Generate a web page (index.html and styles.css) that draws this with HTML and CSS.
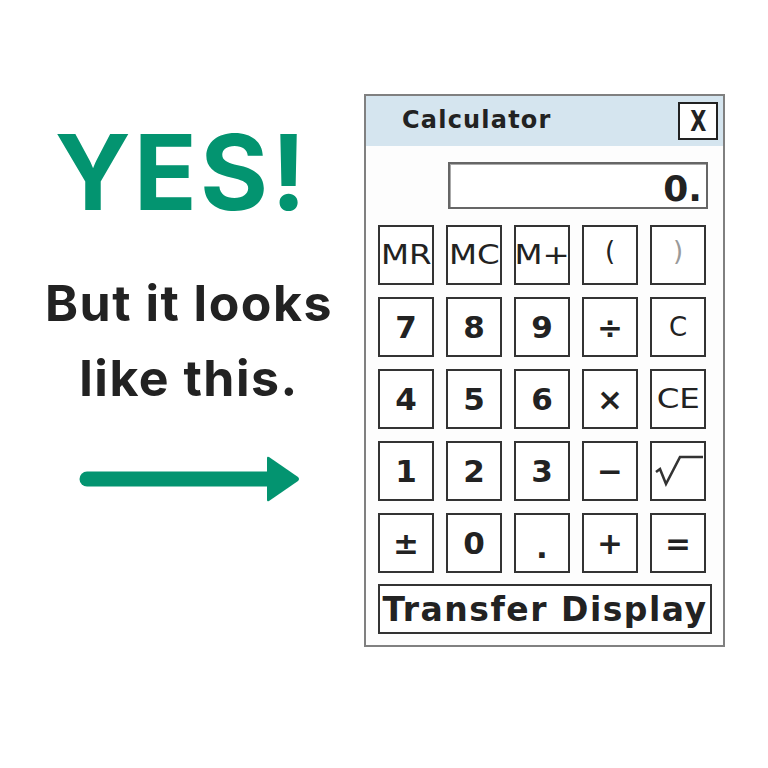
FILE: index.html
```html
<!DOCTYPE html>
<html>
<head>
<meta charset="utf-8">
<link rel="stylesheet" href="styles.css">
</head>
<body>
<div class="page">
  <div class="left">
    <div class="yes">YES!</div>
    <div class="but">But it looks<br>like this.</div>
    <svg class="arrow" width="230" height="50" viewBox="0 0 230 50">
      <line x1="8" y1="25" x2="192" y2="25" stroke="#039470" stroke-width="15" stroke-linecap="round"/>
      <path d="M188 4 Q188 2 190 3 L219 23 Q221 25 219 27 L190 47 Q188 48 188 46 Z" fill="#039470"/>
    </svg>
  </div>
  <div class="calc">
    <div class="titlebar">
      <span class="title">Calculator</span>
      <span class="close"><span class="xch">X</span></span>
    </div>
    <div class="display">0.</div>
    <div class="keys">
      <div class="key mem"><span class="wide">MR</span></div>
      <div class="key mem"><span class="wide">MC</span></div>
      <div class="key mem"><span class="wide">M+</span></div>
      <div class="key paren">(</div>
      <div class="key paren dim">)</div>
      <div class="key num">7</div>
      <div class="key num">8</div>
      <div class="key num">9</div>
      <div class="key op">÷</div>
      <div class="key mem">C</div>
      <div class="key num">4</div>
      <div class="key num">5</div>
      <div class="key num">6</div>
      <div class="key op">×</div>
      <div class="key mem"><span class="wide">CE</span></div>
      <div class="key num">1</div>
      <div class="key num">2</div>
      <div class="key num">3</div>
      <div class="key op">−</div>
      <div class="key sqrt" aria-label="√">
        <svg width="52" height="56" viewBox="0 0 52 56">
          <polyline points="4,29 8,26 14,41 28,14 51,14" fill="none" stroke="#333" stroke-width="2.6" stroke-linejoin="miter"/>
        </svg>
      </div>
      <div class="key op">±</div>
      <div class="key num">0</div>
      <div class="key op dot">.</div>
      <div class="key op">+</div>
      <div class="key op">=</div>
    </div>
    <div class="transfer"><span class="tx">Transfer Display</span></div>
  </div>
</div>
</body>
</html>
```
FILE: styles.css
```css
html, body {
  margin: 0;
  padding: 0;
  background: #ffffff;
}
.page {
  width: 768px;
  height: 768px;
  display: flex;
  flex-direction: row;
  align-items: flex-start;
}
.left {
  width: 364px;
  padding-top: 114px;
  display: flex;
  flex-direction: column;
  align-items: center;
  font-family: Inter, "Open Sans", sans-serif;
  font-weight: 700;
}
.yes {
  color: #039470;
  font-size: 104px;
  line-height: 116px;
  letter-spacing: 3px;
  margin-left: 0px;
}
.but {
  color: #222222;
  font-size: 50px;
  line-height: 75px;
  letter-spacing: 1.5px;
  text-align: center;
  margin-top: 36px;
  margin-left: 14px;
}
.arrow {
  margin-top: 38px;
  margin-left: 24px;
  display: block;
}
.calc {
  margin-top: 94px;
  width: 357px;
  height: 549px;
  border: 2px solid #808080;
  background: #fdfdfd;
  display: flex;
  flex-direction: column;
  font-family: "DejaVu Sans", Verdana, sans-serif;
  color: #222;
}
.titlebar {
  height: 50px;
  background: #d5e5ef;
  display: flex;
  align-items: center;
  justify-content: space-between;
  padding: 0 5px 0 36px;
}
.title {
  font-weight: 700;
  font-size: 24px;
  letter-spacing: 1.2px;
  margin-top: -2px;
}
.close {
  width: 36px;
  height: 34px;
  border: 2px solid #222;
  display: flex;
  align-items: center;
  justify-content: center;
  background: #fff;
}
.xch {
  display: inline-block;
  font-size: 29px;
  font-weight: 700;
  line-height: 1;
  transform: scaleX(0.72);
}
.display {
  align-self: flex-end;
  margin: 16px 15px 0 0;
  width: 252px;
  height: 43px;
  border: 2px solid #666;
  box-shadow: inset 1px 1px 0 #aaa;
  background: #fff;
  text-align: right;
  font-weight: 700;
  font-size: 36px;
  line-height: 50px;
  padding-right: 4px;
}
.keys {
  margin: 16px 0 0 12px;
  display: grid;
  grid-template-columns: repeat(5, 56px);
  grid-auto-rows: 60px;
  column-gap: 12px;
  row-gap: 12px;
}
.key {
  box-sizing: border-box;
  border: 2px solid #333;
  background: #fff;
  display: flex;
  align-items: center;
  justify-content: center;
  overflow: hidden;
}
.num {
  font-size: 31px;
  font-weight: 700;
}
.op {
  font-size: 31px;
  font-weight: 700;
}
.dot {
  padding-top: 8px;
}
.mem {
  font-size: 26px;
}
.wide {
  display: inline-block;
  transform: scaleX(1.25);
}
.paren {
  font-size: 26px;
  font-weight: 400;
  padding-bottom: 8px;
}
.dim {
  color: #9a9a9a;
}
.sqrt svg {
  display: block;
}
.transfer {
  margin: 11px 0 0 12px;
  width: 334px;
  height: 50px;
  box-sizing: border-box;
  border: 2px solid #333;
  background: #fff;
  display: flex;
  align-items: center;
  justify-content: center;
  overflow: hidden;
}
.tx {
  font-size: 33px;
  font-weight: 700;
  letter-spacing: 1.5px;
  white-space: nowrap;
  display: inline-block;
}
```
